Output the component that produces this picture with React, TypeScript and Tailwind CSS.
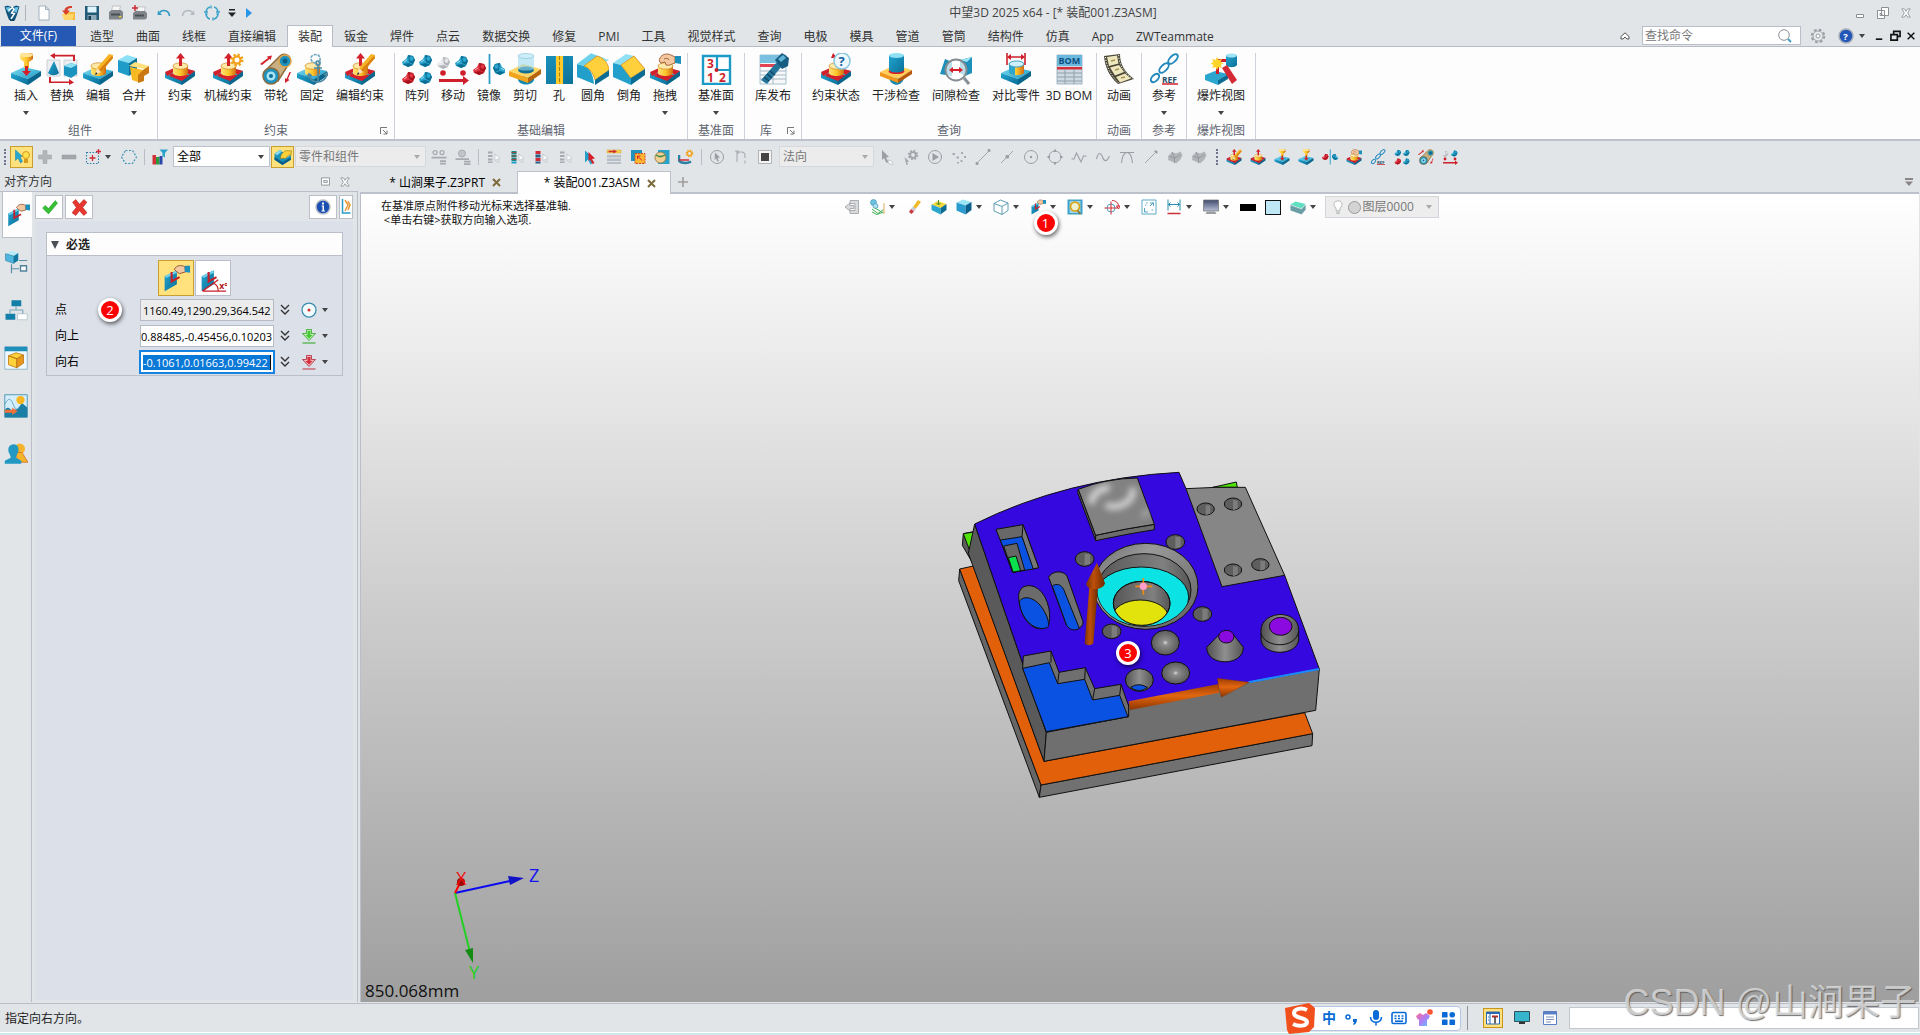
import React from "react";

type Kids = { children?: React.ReactNode };

/* ---------- drawing fragments, all on a 32 x 32 grid ---------- */

const Defs = () => (
  <svg className="absolute h-0 w-0" aria-hidden="true">
    <defs>
      <linearGradient id="blueTop" x1="0" y1="0" x2="1" y2="1">
        <stop offset="0" stopColor="#7fdcf2" />
        <stop offset="1" stopColor="#1899c6" />
      </linearGradient>
      <linearGradient id="blueSide" x1="0" y1="0" x2="1" y2="1">
        <stop offset="0" stopColor="#23a5d0" />
        <stop offset="1" stopColor="#0a6f98" />
      </linearGradient>
      <linearGradient id="gold" x1="0" y1="0" x2="1" y2="0">
        <stop offset="0" stopColor="#ffe27a" />
        <stop offset="0.5" stopColor="#ffc62c" />
        <stop offset="1" stopColor="#cf6a12" />
      </linearGradient>
      <linearGradient id="dark" x1="0" y1="0" x2="0" y2="1">
        <stop offset="0" stopColor="#3f4a6d" />
        <stop offset="1" stopColor="#b9c0d6" />
      </linearGradient>
      <linearGradient id="shirt" x1="0" y1="0" x2="1" y2="1">
        <stop offset="0" stopColor="#ff6a8a" />
        <stop offset="0.5" stopColor="#b07cf5" />
        <stop offset="1" stopColor="#59c8ff" />
      </linearGradient>
    </defs>
  </svg>
);

const Slab = () => (
  <g>
    <path d="M1 20 14 14 31 18 18 26z" fill="url(#blueTop)" />
    <path d="M1 20 18 26v6L1 25z" fill="url(#blueSide)" />
    <path d="M18 26 31 18v5L18 32z" fill="#08658b" />
  </g>
);
const Cyl = () => (
  <g>
    <path d="M9 13v7c0 4 15 4 15 0v-7z" fill="url(#gold)" />
    <ellipse cx="16.500" cy="13" rx="7.500" ry="3.200" fill="#ffe9a6" stroke="#c9862a" strokeWidth=".7" />
  </g>
);
const Bands = () => (
  <path d="M1 19 9 15.500v4.500l-6 3zM24 16l7 2-6 4.500-4-1.500zM9 19l-4 4 13 5 8-6-3-2c-3 3-10 3-14-1z" fill="#d3202b" />
);
const UpArrow = () => <path d="M16.500 0 21 5.500h-3V13h-3V5.500h-3z" fill="#d4202a" />;
const Pencil = () => (
  <g>
    <path d="M15 15 27 1l4 1v3L19 19z" fill="#f6b324" />
    <path d="M17 17 30 3l1 2L19 19z" fill="#d97f12" />
    <path d="M15 15l4 4-6 3z" fill="#f7e2bb" />
    <path d="M13 22l1-3 1.500 2z" fill="#222" />
  </g>
);
const Gear = ({ x = 24, y = 7, r = 5, c = "#f3a31b" }: { x?: number; y?: number; r?: number; c?: string }) => (
  <g>
    <circle cx={x} cy={y} r={r} fill="none" stroke={c} strokeWidth={r / 1.6} strokeDasharray={`${r * 0.4} ${r * 0.385}`} />
    <circle cx={x} cy={y} r={r * 0.72} fill="none" stroke={c} strokeWidth={r * 0.45} />
  </g>
);
const Hand = () => (
  <g>
    <path d="M11 5c2-4 7-5 11-3l4 2v6c-4 1-5 3-9 2l-1-3-4 1c-2-1-2-3-1-5z" fill="#f3c79f" stroke="#a4643b" strokeWidth="1" />
    <path d="M15 6c2-1 4-1 5 1" fill="none" stroke="#a4643b" />
    <path d="M26 3h6v8l-6-1z" fill="#1d8fbb" />
  </g>
);
const Blob = ({ x, y, c, d }: { x: number; y: number; c: string; d: string }) => (
  <g transform={`translate(${x} ${y})`}>
    <path d="M0 7 4 4l2-4 5 1 2 4-2 5-5 2-5-2z" fill={c} />
    <path d="M6 0l5 1 2 4-2 4-4-2z" fill={d} />
    <ellipse cx="9.500" cy="3.600" rx="2" ry="2.400" fill={c} />
    <path d="M1 9l5 3 5-2-4-2z" fill={d} />
    <path d="M2 7l3-2" stroke="#fff" strokeOpacity=".6" fill="none" />
  </g>
);
const B = { c: "#2aa6cf", d: "#0c6d93" };
const R = { c: "#e23340", d: "#a5121d" };
const G = { c: "#e3e5e8", d: "#b0b4b9" };

const Chain = () => (
  <g fill="none" stroke="#2389bd" strokeWidth="2">
    <ellipse cx="7" cy="25" rx="5" ry="3" transform="rotate(-45 7 25)" />
    <ellipse cx="16" cy="15" rx="6" ry="3" transform="rotate(-45 16 15)" />
    <ellipse cx="25" cy="6" rx="6" ry="3" transform="rotate(-45 25 6)" />
  </g>
);
const Plane = () => (
  <g>
    <path d="M3 14 17 7v16L3 31z" fill="url(#blueSide)" />
    <path d="M3 14 17 7v3L5 16z" fill="#6fd0ea" />
    <path d="M11 9v11l9-5" fill="none" stroke="#c81f2b" strokeWidth="2.400" />
  </g>
);

const art: Record<string, React.ReactNode> = {
  insert: (<><Slab /><path d="M10 1c3-2 10-2 13 0v5l-4 3v6h-5V9l-4-3z" fill="url(#gold)" /><ellipse cx="16.500" cy="2" rx="6.500" ry="2" fill="#ffe59a" /><path d="M15 13h3v5h3l-4.500 5L12 18h3z" fill="#d4202a" /></>),
  replace: (<><path d="M1 7h13v16H1zM18 7h13v16H18z" fill="#eceef1" stroke="#ccd0d6" /><path d="M8 8l5 12c-3 3-8 3-11 0z" fill="url(#blueSide)" /><path d="M18 13l7-3 6 2v9l-6 4-7-3z" fill="#1b93bf" /><path d="M18 13l7-3 6 2-6 3z" fill="#8fe0f4" /><path d="M27 8V3.500H9V6L4 2.500 9 0v1.800h20V8zM5 24v4.500h18V26l5 3.500L23 32v-2H3v-6z" fill="#cf1f2a" /></>),
  edit: (<><Slab /><Cyl /><Pencil /></>),
  merge: (<><path d="M0 7 9 2l10 3-8 5z" fill="#8ae0f4" /><path d="M0 7l11 3v13L0 19z" fill="#1f9dc8" /><path d="M11 10l8-5v12l-8 6z" fill="#0b6f98" /><path d="M11 13l6-4 14 4-4 3z" fill="#ffe07a" /><path d="M12 14l13 3v6l-5-1v7l-6-2z" fill="#f8b922" /><path d="M25 17l6-4v7l-5 3v5l-6 2v-8z" fill="#c97812" /></>),
  constraint: (<><Slab /><Bands /><Cyl /><UpArrow /></>),
  mech: (<><Slab /><Bands /><Cyl /><UpArrow /><Gear x={25} y={7} r={5} /></>),
  belt: (<><path d="M4 19 20 3c4-4 12 0 10 6L18 28z" fill="#c9b083" stroke="#8c6a3d" strokeWidth="1.500" /><circle cx="11" cy="23" r="8" fill="#1f93bd" stroke="#8c6a3d" strokeWidth="1.500" /><circle cx="11" cy="23" r="4.500" fill="#a8e4f3" /><circle cx="11" cy="23" r="2" fill="#0b6f98" /><circle cx="25" cy="8" r="6" fill="#1f93bd" stroke="#e0a54a" strokeWidth="1.500" /><circle cx="25" cy="8" r="2.500" fill="#0b5f86" /><path d="M0 11 8 5l-1-1.500 5-1-1.500 4.500-1-1L2 12zM31 19l-3 7 1.500 1-4.500 3v-5l1.500 1 3-7z" fill="#d4202a" /></>),
  fix: (<><Slab /><Cyl /><g fill="none" stroke="#4c8aa5" strokeWidth="1.700"><circle cx="22" cy="10" r="2" /><path d="M22 12v17M18 15h8M13 22c1 5 5 7 9 7s8-3 9-8M11 24l2-3 3 2M28 22l3-2 1 3" /></g><path d="M20 10c-3 0-5-2-5-5s6-5 8-2 1 6-1 7" fill="none" stroke="#72a9c0" strokeWidth="1.700" strokeDasharray="3 1" /></>),
  editC: (<><Slab /><Bands /><Cyl /><UpArrow /><Pencil /></>),
  pattern: (<><Blob x={1} y={2} {...B} /><Blob x={18} y={2} {...B} /><Blob x={1} y={19} {...R} /><Blob x={18} y={19} {...B} /></>),
  move: (<><Blob x={0} y={4} {...G} /><Blob x={18} y={3} {...B} /><circle cx="6" cy="20" r="2.800" fill="#cf1f2a" /><circle cx="26" cy="20" r="2.800" fill="#cf1f2a" /><path d="M2 26h24v-3l6 4.500L26 32v-3H2z" fill="#cf1f2a" /></>),
  mirror: (<><Blob x={0} y={10} {...R} /><path d="M16.500 1v30" stroke="#2a9cc8" strokeWidth="1.800" /><g transform="translate(33 0) scale(-1 1)"><Blob x={0} y={10} {...B} /></g></>),
  cut: (<><path d="M9 27c2 6 14 6 16 0v-4H9z" fill="#1089b3" /><path d="M0 18l14-7 18 5-13 9z" fill="#ffd766" /><path d="M0 18l19 7v5L0 23z" fill="#f0a51c" /><path d="M19 25l13-9v5l-13 9z" fill="#b8660e" /><ellipse cx="17" cy="17" rx="8" ry="3.500" fill="#0f6d92" /><path d="M9 3v13c2 2 14 2 16 0V3z" fill="#9edaf0" fillOpacity=".6" /><ellipse cx="17" cy="3" rx="8" ry="2.500" fill="#cdeef9" stroke="#7fbfd8" strokeWidth=".6" /></>),
  hole: (<><path d="M3 3h27v28H3z" fill="url(#blueSide)" /><path d="M3 3h9v28H3zM21 3h5v28h-5z" fill="#0f7299" fillOpacity=".4" /><path d="M13 3h7v28h-7z" fill="#ffc928" /><path d="M16.500 3v28" stroke="#8a6f10" strokeDasharray="4 1.500" strokeWidth=".8" /></>),
  fillet: (<><path d="M0 11 14 0l18 7-14 8z" fill="#8fe0f4" /><path d="M0 11l7 2c6 2 9 8 10 18L0 24z" fill="#22a0cb" /><path d="M0 11 14 1l6 2L7 13z" fill="#6ed0ea" /><path d="M7 13 20 3c7 2 11 7 12 14L18 27C16 20 13 15 7 13z" fill="#ffcf3c" stroke="#d4901b" strokeWidth=".8" /><path d="M18 27l14-10v6L18 32z" fill="#0b6c93" /></>),
  chamfer: (<><path d="M0 10 13 1l8 2L8 12z" fill="#8fe0f4" /><path d="M0 10l8 2 10 13v7L0 24z" fill="#22a0cb" /><path d="M8 12 21 3l11 13-14 9z" fill="#ffcf3c" stroke="#d4901b" strokeWidth=".8" /><path d="M18 25l14-9v6L18 32z" fill="#0b6c93" /></>),
  drag: (<><Slab /><Bands /><Cyl /><Hand /></>),
  datum: (<><path d="M3 3h27v28H3z" fill="#fff" stroke="#1c9bc6" strokeWidth="2.400" /><path d="M17 3v14M17 17h13" stroke="#1c9bc6" strokeWidth="2.200" /><circle cx="16.500" cy="17" r="2" fill="#cf1f2a" /><g fill="#cf1f2a" fontSize="12" fontWeight="700" fontFamily="Open Sans, sans-serif"><text x="7" y="15">3</text><text x="7" y="28.500">1</text><text x="19" y="28.500">2</text></g></>),
  lib: (<><path d="M3 2h26v29H3z" fill="#f6f8fa" stroke="#8fb2c6" strokeWidth=".8" /><path d="M3 2h26v8H3z" fill="#79bfe0" /><path d="M3 11h26v3H3z" fill="#e04450" /><path d="M3 18h26M3 22h26M3 26h26M16 14v17" stroke="#a9b8c4" /><path d="M4 27 20 9l5 4L10 31z" fill="#24749a" /><path d="M7 24l5 4M10 21l5 4M13 18l5 4" stroke="#0f4563" strokeWidth="1.200" /><path d="M18 7l7-7 7 5-1 8-6 3z" fill="#155c80" /><path d="M21 6l5-4 3 3-5 4z" fill="#5fb5d6" /></>),
  status: (<><Slab /><Bands /><Cyl /><path d="M13 0l4 5h-6z" fill="#d4202a" /><circle cx="22" cy="8" r="8" fill="#eef9fe" stroke="#86c5dd" strokeWidth="1.500" /><text x="18.500" y="13" fontSize="13" fontWeight="700" fill="#1a5fa0" fontFamily="Open Sans, sans-serif">?</text></>),
  interfere: (<><path d="M9 25c2 9 13 9 15 0z" fill="#1089b3" /><path d="M0 19l15-7 17 5-14 9z" fill="#ffcf5a" /><path d="M0 19l18 7v4L0 23z" fill="#f0961c" /><path d="M18 26l14-9v4l-14 9z" fill="#b85a0e" /><path d="M9 2v16c2 3 13 3 15 0V2z" fill="url(#blueSide)" /><ellipse cx="16.500" cy="2.500" rx="7.500" ry="2.500" fill="#8fe0f4" /><path d="M9 18c2 3 13 3 15 0" fill="none" stroke="#d4202a" strokeWidth="1.500" /></>),
  gap: (<><path d="M5 6l7 3v14l-12-2z" fill="#1c8fba" /><path d="M20 7l12-3v16l-7 3-5-3z" fill="#1c8fba" /><path d="M20 7l12-3-5 5z" fill="#9be3f5" /><circle cx="16" cy="17" r="10.500" fill="#fff" fillOpacity=".7" stroke="#858b91" strokeWidth="1.800" /><path d="M24 25l5 6" stroke="#8a9097" strokeWidth="3" /><path d="M9 17l4-3v2h6v-2l4 3-4 3v-2h-6v2z" fill="#d4202a" /></>),
  compare: (<><Slab /><path d="M9 11v9c2 3 13 3 15 0v-9z" fill="url(#gold)" /><path d="M9 11v9c1 1.500 4 2 6 2v-9z" fill="#2aa6cf" /><ellipse cx="16.500" cy="11" rx="7.500" ry="3" fill="#cfeffa" stroke="#3a9fc2" /><path d="M7 0v12M25 0v12M8 4h16" stroke="#cf1f2a" strokeWidth="1.600" /><path d="M7 4l4-3v6zM25 4l-4-3v6z" fill="#cf1f2a" /></>),
  bom: (<><path d="M4 2h25v29H4z" fill="#cfd9e1" stroke="#93a7b6" strokeWidth=".8" /><path d="M4 2h25v11H4z" fill="#6bb8df" /><text x="5.500" y="11" fontSize="9" fontWeight="700" fill="#0e4f80" fontFamily="Open Sans, sans-serif">BOM</text><path d="M4 14h25v2.500H4z" fill="#d4303c" /><path d="M4 20h25M4 24h25M4 28h25M12 16v15M21 16v15" stroke="#8ea0ae" /></>),
  anim: (<><path d="M1 3 17 1c0 10 4 17 14 25l-16 5C6 23 2 14 1 3z" fill="#4a4736" /><path d="M4 4l10-1.500 1.500 8L6 13zM7 14.500l9-2.500 5 7-9 3.500zM13 24l9-3.500 6 5-11 4z" fill="#efe7bd" /><path d="M2.500 4c1 10 5 18 13 26M15.700 2c0 9 5 17 14 24" fill="none" stroke="#fff" strokeWidth="1" strokeDasharray="1.200 1.600" /><path d="M8 8l4-1M12 17l4-1M18 25l4-1" stroke="#a8945a" strokeWidth="1.500" /></>),
  refLink: (<><Chain /><text x="14" y="29.500" fontSize="8.500" fontWeight="700" fill="#24506b" fontFamily="Open Sans, sans-serif">REF</text><path d="M14 31h16" stroke="#d4202a" strokeWidth="1.500" /></>),
  explode: (<><path d="M0 22l10-4 13 3-10 6zM0 22l13 5v5L0 27z" fill="#2aa6cf" /><path d="M13 27l10-6v5l-10 6z" fill="#0b6c93" /><path d="M21 2h11v10c-2 3-9 3-11 0z" fill="url(#blueSide)" /><ellipse cx="26.500" cy="2.500" rx="5.500" ry="2" fill="#9be3f5" /><path d="M11 6h10v3h-7v12h-3z" fill="#cf1f2a" /><path d="M17 15l5-3 10 15-5 4z" fill="#d22b35" /><path d="M12 4l1.500 3L17 6l-1.500 3 3 1.500-3 1.500 1.500 3-3.500-1L12 17l-1.500-3L7 15l1.500-3-3-1.500 3-1.500L7 6l3.500 1z" fill="#ffd42a" /></>),

  logo: (<><path d="M1 3c3-2 6-2 9-1l6 3 8-4 7 2-4 14-5 13H10L5 17z" fill="#14567e" /><path d="M3 5l8-1 4 5-6 6zM21 5l8-1-4 12-5-3z" fill="#6cc4e4" /><path d="M9 11l8-6 3 4-5 7 6 1-7 11" stroke="#fff" strokeWidth="2.800" fill="none" /><path d="M12 29h9v3h-9z" fill="#0c3f60" /></>),
  newDoc: (<path d="M6 2h13l7 7v21H6zM19 2v7h7" fill="#fff" stroke="#9aa9b8" strokeWidth="1.800" />),
  open: (<><path d="M8 14h22v16H8z" fill="#f6b93b" /><path d="M4 18h24l-3 12H8z" fill="#ffd667" /><path d="M24 2C14 2 9 6 9 11H4l8 9 8-9h-5c0-3 3-6 9-5z" fill="#d8402b" /></>),
  save: (<><path d="M2 2h28v28H2z" fill="#235a78" /><path d="M7 3h18v12H7z" fill="#dff4fb" /><path d="M7 20h18v10H7z" fill="#8fa8b6" /><path d="M9 22h5v8H9z" fill="#143c52" /></>),
  print: (<><path d="M9 2h16l-3 12H7z" fill="#f5f5f5" stroke="#999" /><path d="M2 14l5-4h19l4 4v12l-4 3H2z" fill="#7f858b" /><path d="M6 17h18v4H6z" fill="#4b5055" /><path d="M22 22h5v3h-5z" fill="#dccf3a" /></>),
  printPlus: (<><path d="M11 4h16l-3 10H9z" fill="#f5f5f5" stroke="#999" /><path d="M2 16l5-4h19l4 4v10l-4 3H2z" fill="#7f858b" /><path d="M6 19h18v4H6z" fill="#4b5055" /><path d="M6 0v12M0 6h12" stroke="#cf2a35" strokeWidth="3" /></>),
  undo: (<><path d="M7 15c6-7 19-5 20 7" fill="none" stroke="#2f9ac4" strokeWidth="3.200" /><path d="M3 20 12 20 4 11z" fill="#2f9ac4" /></>),
  redo: (<><path d="M25 15C19 8 6 10 5 22" fill="none" stroke="#b4bac0" strokeWidth="3" /><path d="M29 20 20 20 28 11z" fill="#b4bac0" /></>),
  sync: (<path d="M4 13c1-5 4-8 8-9M20 4c4 1 7 4 8 9M28 19c-1 5-4 8-8 9M12 28c-4-1-7-4-8-9M0 14h8M24 14h8M2 18h5M25 18h5M14 1v6M18 25v6" fill="none" stroke="#3ea3c8" strokeWidth="2.800" />),

  pick: (<><path d="M3 2l14 13-5 1 5 9-4 3-5-10-5 5z" fill="#27a7d4" stroke="#0d7ca6" /><circle cx="24" cy="12" r="7" fill="#ffe04d" stroke="#d79a1a" strokeWidth="2" /><path d="M20 20h8v8h-8z" fill="#d79a1a" /></>),
  plus: (<path d="M12 3h8v9h9v8h-9v9h-8v-9H3v-8h9z" fill="#b3b6b9" stroke="#9ea1a4" />),
  minus: (<path d="M2 12h28v8H2z" fill="#a4a7aa" stroke="#96999c" />),
  boxPlus: (<><path d="M3 7h24v22H3z" fill="none" stroke="#2a7fa5" strokeWidth="2.200" strokeDasharray="3 3" /><path d="M15 12v12M9 18h12M27 0v10M22 5h10" stroke="#cf2a35" strokeWidth="2.600" /></>),
  hexa: (<path d="M9 3h14l8 13-8 13H9L1 16z" fill="none" stroke="#3a92b5" strokeWidth="2.400" strokeDasharray="4 3" />),
  filter: (<><path d="M1 12h7v19H1z" fill="#d3303a" /><path d="M8 16h7v15H8z" fill="#2a9a3c" /><path d="M15 14h6v17h-6z" fill="#2b46a8" /><path d="M15 1h17l-6 7v9l-5-3V8z" fill="#2aa3cb" /></>),
  surf: (<><path d="M1 10l10-7 6 6-4 6 8 3 9-6v9l-15 9L1 21z" fill="#1a93bd" /><path d="M1 21l14 9 15-9v-4l-15 8L1 16z" fill="#0b5f86" /><path d="M1 10l10-7 3 3-8 7z" fill="#7fd6ee" /><path d="M13 11l7-6h11l-1 8-4-1-6 7-4-1-5 1z" fill="#ffd23a" stroke="#8a6c14" /></>),
  grayA: (<><circle cx="8" cy="7" r="4" fill="none" stroke="#a7abaf" strokeWidth="2.500" /><circle cx="22" cy="7" r="4" fill="none" stroke="#a7abaf" strokeWidth="2.500" /><path d="M1 17h30M18 24h12M18 29h12" stroke="#a7abaf" strokeWidth="3.500" /></>),
  grayB: (<><circle cx="14" cy="9" r="7" fill="#c3c6c9" stroke="#a7abaf" strokeWidth="2" /><path d="M1 20h27M18 25h13M18 30h13" stroke="#a7abaf" strokeWidth="3.500" /></>),
  list: (<><path d="M4 5h9v4H4zM4 12h9v4H4zM4 19h9v4H4zM4 25h9v3H4z" fill="#a7abaf" /><path d="M18 10l10 9-5 1 3 6-3 1-2-6-3 2z" fill="#fff" stroke="#a7abaf" /></>),
  listT: (<><path d="M3 4h10v6H3zM3 11h10v6H3zM3 18h10v6H3z" fill="#1a8a86" /><path d="M3 7h10M3 14h10M3 21h10" stroke="#c8313a" strokeWidth="1.500" /><path d="M3 25h10v4H3z" fill="#1f9dc8" /><path d="M18 10l10 9-5 1 3 6-3 1-2-6-3 2z" fill="#fff" stroke="#a7abaf" /></>),
  listR: (<><path d="M3 4h10v6H3zM3 18h10v6H3z" fill="#cf2a35" /><path d="M3 11h10v6H3zM3 25h10v4H3z" fill="#255f86" /><path d="M18 10l10 9-5 1 3 6-3 1-2-6-3 2z" fill="#fff" stroke="#a7abaf" /></>),
  cursorBR: (<><path d="M6 3l17 15-7 1 5 9-4 3-5-10-6 6z" fill="#22a0cb" /><path d="M13 6l13 13-6 1 5 8-4 2-5-9-3 3z" fill="#d3202b" /></>),
  rows: (<><path d="M2 2h28v6H2z" fill="#ffd34a" stroke="#c0a040" /><path d="M2 12h28v5H2zM2 19h28v5H2zM2 26h28v4H2z" fill="#b8bfc7" /><path d="M5 5h12" stroke="#cf2a35" strokeWidth="3" /><path d="M15 1l7 4-7 4z" fill="#cf2a35" /></>),
  sheetO: (<><path d="M2 2h22v22H2z" fill="#1f93bd" /><path d="M10 9h20v20H10z" fill="#ffb733" stroke="#d4481d" strokeWidth="2" strokeDasharray="4 2" /><path d="M15 14l9 9M15 14h6M15 14v6" stroke="#d4202a" strokeWidth="2" /></>),
  globe: (<><path d="M8 2h23v28H8z" fill="#2aa3cb" /><circle cx="13" cy="17" r="11" fill="#f1cf95" stroke="#8e6b33" strokeWidth="1.500" /><path d="M4 12c5 4 12 4 18 0" stroke="#3a8a48" strokeWidth="3" fill="none" /></>),
  hookGear: (<><path d="M2 12v10c0 6 16 8 24 3" fill="none" stroke="#2a7fa5" strokeWidth="5" /><path d="M2 22h20" stroke="#cf2a35" strokeWidth="3" /><Gear x={23} y={9} r={6} /></>),
  circArrow: (<><circle cx="16" cy="16" r="13" fill="none" stroke="#9b9fa3" strokeWidth="2" /><path d="M12 7l10 10-5 1 3 6-3 1-3-6-3 3z" fill="#9b9fa3" /></>),
  hook: (<path d="M8 26V6h9c5 0 7 3 7 8v4M24 23v6M4 4h6v6" fill="none" stroke="#a7abaf" strokeWidth="2.200" />),
  square: (<><path d="M3 3h26v26H3z" fill="#f4f4f4" stroke="#b3b3b3" strokeWidth="2" /><path d="M8 8h16v16H8z" fill="#444" /></>),
  gCursor: (<><path d="M6 2l14 14-6 1 5 9-4 2-5-10-4 4z" fill="#9b9fa3" /><path d="M18 22l8 3 2 6-8-2z" fill="#fff" stroke="#a7abaf" /></>),
  gGear: (<><Gear x={20} y={12} r={8} c="#a0a4a8" /><path d="M3 16l9 9-4 1 2 5-3 1z" fill="#a0a4a8" /></>),
  gPlay: (<><circle cx="16" cy="16" r="13" fill="none" stroke="#9b9fa3" strokeWidth="2" /><path d="M11 8l13 8-13 8z" fill="#9b9fa3" /></>),
  gDots: (<path d="M3 8h5v4H3zM11 15h5v4h-5zM20 6h4v4h-4zM26 14h4v4h-4zM19 22h4v4h-4zM12 26h4v3h-4z" fill="#a7abaf" />),
  gLine: (<path d="M4 28 28 4M2 27h4v4H2zM26 1h4v4h-4z" fill="#9b9fa3" stroke="#9b9fa3" strokeWidth="1.800" />),
  gLine2: (<path d="M4 28 28 4M14 13h5v5h-5z" fill="#9b9fa3" stroke="#9b9fa3" strokeWidth="1.800" />),
  gCirc: (<><circle cx="16" cy="16" r="13" fill="none" stroke="#9b9fa3" strokeWidth="2" /><circle cx="16" cy="16" r="2.500" fill="#9b9fa3" /></>),
  gCirc2: (<><circle cx="16" cy="16" r="12" fill="none" stroke="#9b9fa3" strokeWidth="2" /><path d="M14 1h4v5h-4zM14 26h4v5h-4zM1 14h5v4H1zM26 14h5v4h-5z" fill="#9b9fa3" /></>),
  gWave: (<path d="M1 20h5l5-12 9 18 5-12h6" fill="none" stroke="#9b9fa3" strokeWidth="2.200" />),
  gWave2: (<path d="M3 20c4-16 9-12 12-4s8 12 14-2" fill="none" stroke="#9b9fa3" strokeWidth="2.200" />),
  gArch: (<path d="M2 7h28M5 28C7 10 12 7 16 7s9 3 11 21" fill="none" stroke="#9b9fa3" strokeWidth="2.200" />),
  gLine3: (<path d="M4 28 28 4M23 4h5v5z" fill="#9b9fa3" stroke="#9b9fa3" strokeWidth="1.800" />),
  gBlob: (<><path d="M3 14l7-8 8 3 9-4 4 7-4 9-9 8-9-4-7-3z" fill="#b2b5b8" /><path d="M3 14l12 4 12-6M15 18v10M10 6l5 12" fill="none" stroke="#8f9397" strokeWidth="1.500" /></>),

  exit: (<path d="M12 3h17v26H12v-6h10V9H12zM12 8v5h8v6h-8v5L2 16z" fill="#d9dbdd" stroke="#a2a5a8" strokeWidth="1.800" />),
  origin: (<><circle cx="9" cy="7" r="6" fill="#6cc3e0" stroke="#2c7fa3" /><circle cx="13" cy="14" r="5" fill="#a9dff0" stroke="#2c7fa3" /><path d="M6 20l12 9 11-8M6 26l10 5 13-5M12 18l16 10" fill="none" stroke="#44b257" strokeWidth="2" /><path d="M30 8v22" stroke="#e0a54a" strokeWidth="1.800" /></>),
  brush: (<><path d="M14 16 24 2l6 4-11 14z" fill="#f1b928" /><path d="M10 20l4-5 6 5-4 5z" fill="#c7ccd2" /><path d="M6 26l4-6 6 5-5 5z" fill="#c93a40" /></>),
  cubeY: (<><path d="M1 11 14 4l17 6-12 8z" fill="#f4d93d" /><path d="M1 11l18 7v13L1 22z" fill="#2aa6cf" /><path d="M19 18l12-8v12l-12 9z" fill="#0b6c93" /><path d="M15 2v9M11 8l4 4 4-4" fill="none" stroke="#4a8a28" strokeWidth="2" /></>),
  cubeB: (<><path d="M1 7 14 1l17 5-12 7z" fill="#9be3f5" /><path d="M1 7l18 6v18L1 23z" fill="#2a9ccf" /><path d="M19 13l12-7v16l-12 9z" fill="#0b5f8c" /></>),
  cubeW: (<path d="M2 9 15 2l15 6v15l-12 8-16-7zM2 9l16 6 12-7M18 15v16" fill="#fff" stroke="#4f93ad" strokeWidth="1.800" />),
  align: (<><Plane /><path d="M14 6c3-5 8-5 12-3l1 6-7 2-3-2z" fill="#f3c79f" stroke="#8a4a2b" /><path d="M26 2h6v8l-6-1z" fill="#1d8fbb" /></>),
  alignAng: (<><Plane /><path d="M4 31 22 18M4 31h27M17 22c4 2 5 5 5 9" fill="none" stroke="#c81f2b" strokeWidth="1.500" /><text x="23" y="28" fontSize="10" fontWeight="700" fill="#b01822" fontFamily="Open Sans, sans-serif">x°</text></>),
  zoomW: (<><path d="M1 1h30v30H1z" fill="#3fa0c8" /><path d="M5 4h22v24H5z" fill="#9fd6ea" /><circle cx="16" cy="15" r="9" fill="#eef2d0" stroke="#d9a41a" strokeWidth="3.500" /><path d="M21 23l6 7" stroke="#8d6d1f" strokeWidth="3" /></>),
  rotate: (<><circle cx="14" cy="18" r="8" fill="none" stroke="#3a9cc0" strokeWidth="1.800" /><path d="M14 5v26M1 18h26" stroke="#cf2a35" strokeWidth="2" /><path d="M16 3c8 0 13 5 13 12M29 20l-4-6h7z" fill="none" stroke="#cf2a35" strokeWidth="2" /></>),
  fit: (<><path d="M2 2h28v28H2z" fill="#fff" stroke="#5fa9c6" strokeWidth="2" /><path d="M7 18v8h7M25 7l-7 7M18 8h7v6M10 8h3M8 12h2M21 22h3" fill="none" stroke="#2a8db5" strokeWidth="1.600" /></>),
  dist: (<><path d="M4 1v22M28 1v22M5 11h22M9 7l-4 4 4 4M23 7l4 4-4 4" fill="none" stroke="#2a8db5" strokeWidth="2" /><path d="M3 29h26" stroke="#c8313a" strokeWidth="3" /></>),
  screen: (<><path d="M1 2h30v22H1z" fill="url(#dark)" stroke="#777" strokeWidth="1.500" /><path d="M8 25h16l3 5H5z" fill="#9a9da1" /></>),
  layers: (<><path d="M1 11 11 5l20 5-8 9z" fill="#5fe0c3" /><path d="M1 12l22 8 8-9v11l-8 9L1 23z" fill="#7fa9b0" /><path d="M1 16l22 8 8-9M1 20l22 8 8-9" fill="none" stroke="#4c8d96" strokeWidth="1.500" /></>),
  bulb: (<path d="M16 2c-7 0-10 5-8 10l4 7v4h8v-4l4-7c2-5-1-10-8-10zM12 26h8M13 29h6" fill="#fff" stroke="#a9acaf" strokeWidth="1.800" />),

  tree: (<><path d="M2 5l8-4 9 3-6 4z" fill="#b9ebf7" /><path d="M2 5l11 3v10L2 14z" fill="#4fb7de" stroke="#2c7fa3" strokeWidth=".8" /><path d="M13 8l6-4v10l-6 4z" fill="#0f77a0" /><path d="M10 19v12M10 25h10M20 14h11" fill="none" stroke="#5e8ea6" strokeWidth="1.600" /><path d="M22 21h8v7h-8z" fill="#fff" stroke="#4f819a" strokeWidth="1.800" /></>),
  org: (<><path d="M10 3h13v8H10zM2 21h13v8H2z" fill="#137fa8" /><path d="M18 21h13v8H18z" fill="#fff" stroke="#a9c0cc" /><path d="M16 11v5M8 21v-5h17v5" fill="none" stroke="#79a7bb" strokeWidth="1.500" /></>),
  cubePage: (<><path d="M1 1h30v30H1z" fill="#eef7fb" stroke="#7aa9bf" /><path d="M1 1h30v6H1z" fill="#1d8fb8" /><path d="M6 13l10-4 10 3-9 5zM6 13l11 4v12L6 25z" fill="#ffd23a" stroke="#b8700f" /><path d="M17 17l9-5v11l-9 6z" fill="#e79619" stroke="#b8700f" /></>),
  scene: (<><path d="M1 1h30v30H1z" fill="#d5effa" stroke="#2a7fa5" /><path d="M1 21c4-4 6-3 9 1l8-2 6-8 7 6v13H1z" fill="#1b7ea5" /><path d="M1 14C6 4 9 6 12 13s4 9 8 5" fill="none" stroke="#5a9fc0" strokeWidth="1.200" /><circle cx="22" cy="8" r="5.500" fill="#f9b51e" /><path d="M1 21h10v-3l7 5-7 5v-3H1z" fill="#f0703a" /></>),
  users: (<><circle cx="21" cy="9" r="7" fill="#f6b42c" /><path d="M16 14h8l8 13H18z" fill="#f6b42c" stroke="#cf6a2a" /><path d="M13 3c6 0 7 6 6 10-1 3-3 5-3 8l7 4v4H1v-4l8-4c0-3-2-5-3-8-1-5 1-10 7-10z" fill="#2298c2" /></>),
  check: (<path d="M3 17l5-5 6 6L27 3l4 5-17 20z" fill="#35c234" stroke="#1b8f1d" />),
  cross: (<path d="M3 6l6-5 7 9 8-9 6 5-8 10 8 10-6 5-8-9-7 9-7-5 8-10z" fill="#e8372f" stroke="#a81a18" />),
  info: (<><circle cx="16" cy="16" r="14" fill="#1b4fb2" stroke="#b9bec6" strokeWidth="3" /><path d="M13 13h5v10h2v2h-7v-2h2v-8h-2zM14 7h4v4h-4z" fill="#fff" /></>),
  circPt: (<><circle cx="16" cy="16" r="14" fill="#f1fafd" stroke="#3a8cae" strokeWidth="2.500" /><circle cx="16" cy="16" r="3" fill="#d4302c" /></>),
  downG: (<><path d="M11 3h10v8h8L16 25 3 11h8z" fill="#b6f0a6" stroke="#35a02e" strokeWidth="1.600" /><path d="M13 6h6v8h4l-7 7-7-7h4z" fill="#46c838" /><path d="M3 30h26" stroke="#49b342" strokeWidth="2.500" /></>),
  downR: (<><path d="M11 3h10v8h8L16 25 3 11h8z" fill="#f2b3b8" stroke="#ab2a36" strokeWidth="1.600" /><path d="M13 6h6v8h4l-7 7-7-7h4z" fill="#d62c3c" /><path d="M3 30h26" stroke="#c3555f" strokeWidth="2.500" /></>),
  help: (<><circle cx="16" cy="16" r="14" fill="#2257b8" stroke="#aab0ba" strokeWidth="3" /><text x="10.500" y="23" fontSize="19" fontWeight="700" fill="#fff" fontFamily="Open Sans, sans-serif">?</text></>),
  gearG: (<><circle cx="16" cy="16" r="12.500" fill="none" stroke="#999da2" strokeWidth="4" strokeDasharray="5.500 4.320" /><circle cx="16" cy="16" r="10" fill="#e8eaec" stroke="#999da2" strokeWidth="1.800" /><circle cx="16" cy="16" r="4" fill="#fff" stroke="#999da2" strokeWidth="2" /></>),
};

const Pic = ({ n, cls = "h-4 w-4" }: { n: string; cls?: string }) => (
  <svg viewBox="0 0 32 32" className={`${cls} shrink-0`} aria-hidden="true">{art[n]}</svg>
);
const Caret = ({ cls = "border-t-[#444]" }: { cls?: string }) => (
  <span className={`block h-0 w-0 shrink-0 border-x-[3px] border-t-[4px] border-x-transparent ${cls}`} />
);
const Badge = ({ children, cls }: Kids & { cls: string }) => (
  <span className={`absolute flex h-6 w-6 items-center justify-center rounded-full border-[3px] border-white bg-[#fb0303] text-[13px] leading-none text-white shadow-[1px_2px_4px_rgba(0,0,0,0.6)] ${cls}`}>{children}</span>
);
const WinIcon = ({ d, dark = false, cls = "h-3 w-3" }: { d: string; dark?: boolean; cls?: string }) => (
  <svg viewBox="0 0 12 12" className={cls} fill={dark ? "none" : "#fff"} stroke={dark ? "#111" : "#8b8f94"} strokeWidth={dark ? 1.8 : 1}><path d={d} /></svg>
);
const CROSS = "M1 1h3l2 3 2-3h3L8 6l3 5H8L6 8l-2 3H1l3-5z";

/* ---------- ribbon ---------- */

type Tool = { n: string; t: string; w?: string; more?: boolean };
type Grp = { t: string; cls: string; launch?: boolean; tools: Tool[] };

const groups: Grp[] = [
  { t: "组件", cls: "pl-2 pr-[5px]", tools: [{ n: "insert", t: "插入", more: true }, { n: "replace", t: "替换" }, { n: "edit", t: "编辑" }, { n: "merge", t: "合并", more: true }] },
  { t: "约束", cls: "px-1", launch: true, tools: [{ n: "constraint", t: "约束" }, { n: "mech", t: "机械约束", w: "w-[60px]" }, { n: "belt", t: "带轮" }, { n: "fix", t: "固定" }, { n: "editC", t: "编辑约束", w: "w-[60px]" }] },
  { t: "基础编辑", cls: "px-1", tools: [{ n: "pattern", t: "阵列" }, { n: "move", t: "移动" }, { n: "mirror", t: "镜像" }, { n: "cut", t: "剪切" }, { n: "hole", t: "孔", w: "w-8" }, { n: "fillet", t: "圆角" }, { n: "chamfer", t: "倒角" }, { n: "drag", t: "拖拽", more: true }] },
  { t: "基准面", cls: "px-1", tools: [{ n: "datum", t: "基准面", w: "w-12", more: true }] },
  { t: "库", cls: "px-1", launch: true, tools: [{ n: "lib", t: "库发布", w: "w-12" }] },
  { t: "查询", cls: "px-1", tools: [{ n: "status", t: "约束状态", w: "w-[60px]" }, { n: "interfere", t: "干涉检查", w: "w-[60px]" }, { n: "gap", t: "间隙检查", w: "w-[60px]" }, { n: "compare", t: "对比零件", w: "w-[60px]" }, { n: "bom", t: "3D BOM", w: "w-[46px]" }] },
  { t: "动画", cls: "px-1", tools: [{ n: "anim", t: "动画" }] },
  { t: "参考", cls: "px-1", tools: [{ n: "refLink", t: "参考", more: true }] },
  { t: "爆炸视图", cls: "px-1", tools: [{ n: "explode", t: "爆炸视图", w: "w-[60px]", more: true }] },
];

const tabs = ["造型", "曲面", "线框", "直接编辑", "装配", "钣金", "焊件", "点云", "数据交换", "修复", "PMI", "工具", "视觉样式", "查询", "电极", "模具", "管道", "管筒", "结构件", "仿真", "App", "ZWTeammate"];

const Ribbon = () => (
  <section className="flex items-stretch border-b-2 border-[#bcc1cb] bg-[#fdfdfd] pt-[6px]">
    {groups.map((g) => (
      <div key={g.t} className={`flex flex-col border-r border-[#ccd1da] ${g.cls}`}>
        <div className="flex h-[68px]">
          {g.tools.map((t) => (
            <button key={t.t} type="button" className={`flex flex-col items-center ${t.w ?? "w-9"}`}>
              <Pic n={t.n} cls="h-8 w-8" />
              <span className="mt-[3px] h-4 whitespace-nowrap leading-4">{t.t}</span>
              {t.more && <span className="mt-[7px]"><Caret /></span>}
            </button>
          ))}
        </div>
        <div className="relative flex h-[18px] items-center justify-center pt-[2px] text-[#5d6470]">
          <span className={g.t === "库" ? "pr-[14px]" : ""}>{g.t}</span>
          {g.launch && (
            <button type="button" aria-label={`${g.t}设置`} className="absolute right-[2px] top-[6px]">
              <svg viewBox="0 0 8 8" className="h-2 w-2" fill="none" stroke="#777"><path d="M.5 7V.5H7M3 3l4 4M7 3.500V7H3.500" /></svg>
            </button>
          )}
        </div>
      </div>
    ))}
  </section>
);

/* ---------- selection tool bar ---------- */

const Tb = ({ n }: { n: string }) => (
  <button type="button" aria-label={n} className="flex h-[22px] w-6 shrink-0 items-center justify-center"><Pic n={n} /></button>
);
const Sep = () => <span className="mx-[3px] h-4 w-px shrink-0 bg-[#b9bec6]" />;
const Grip = () => <span className="mx-[4px] h-4 w-0 shrink-0 border-l-2 border-dotted border-[#6d7389]" />;
const Combo = ({ v, w, off = false, label }: { v: string; w: string; off?: boolean; label: string }) => (
  <span className={`relative flex h-[21px] shrink-0 items-center border ${w} ${off ? "border-[#d5d8dc] bg-[#ececec] text-[#777]" : "border-[#bcc1cb] bg-white text-black"}`}>
    <select aria-label={label} disabled={off} className="h-full w-full appearance-none pl-[3px] opacity-100 outline-none"><option>{v}</option></select>
    <span className="pointer-events-none absolute right-[5px]"><Caret cls={off ? "border-t-[#aaa]" : "border-t-[#444]"} /></span>
  </span>
);

const SelectBar = () => (
  <section className="flex h-[30px] items-center overflow-hidden pt-px">
    <Grip />
    <button type="button" aria-label="拾取" className="flex h-[22px] w-[23px] shrink-0 items-center justify-center border border-[#c9a030] bg-[#ffe27d]"><Pic n="pick" /></button>
    <Tb n="plus" /><Tb n="minus" /><Tb n="boxPlus" />
    <span className="w-3 shrink-0"><Caret /></span>
    <Tb n="hexa" />
    <Sep />
    <Tb n="filter" />
    <span className="ml-px" />
    <Combo v="全部" w="w-[97px]" label="过滤器" />
    <button type="button" aria-label="拾取范围" className="mx-px flex h-[22px] w-[23px] shrink-0 items-center justify-center border border-[#c9a030] bg-[#ffe27d]"><Pic n="surf" cls="h-[18px] w-[18px]" /></button>
    <Combo v="零件和组件" w="w-[131px]" off label="范围" />
    <span className="ml-px" />
    <Tb n="grayA" /><Tb n="grayB" />
    <Sep />
    {["list", "listT", "listR", "list", "cursorBR", "rows", "sheetO", "globe", "hookGear"].map((n, i) => <Tb key={i} n={n} />)}
    <Sep />
    <Tb n="circArrow" /><Tb n="hook" /><Tb n="square" />
    <span className="ml-[2px]" />
    <Combo v="法向" w="w-[95px]" off label="方向" />
    <span className="ml-px" />
    {["gCursor", "gGear", "gPlay", "gDots", "gLine", "gLine2", "gCirc", "gCirc2", "gWave", "gWave2", "gArch", "gLine3", "gBlob", "gBlob"].map((n, i) => <Tb key={i} n={n} />)}
    <span className="ml-px" />
    <Grip />
    {["editC", "constraint", "insert", "insert", "mirror", "drag", "refLink", "pattern", "belt", "move"].map((n, i) => <Tb key={i} n={n} />)}
  </section>
);

/* ---------- left panel ---------- */

const Field = ({ label, icon, children }: Kids & { label: string; icon: string }) => (
  <div className="relative flex h-[26px] items-center pl-2">
    <label htmlFor={label} className="w-[84px] text-black">{label}</label>
    <div className="flex w-[136px] justify-center">{children}</div>
    <button type="button" aria-label={`${label}展开`} className="ml-[5px]">
      <svg viewBox="0 0 10 12" className="h-3 w-[10px]" fill="none" stroke="#333" strokeWidth="1.400"><path d="M1 1l4 4 4-4M1 6l4 4 4-4" /></svg>
    </button>
    <button type="button" aria-label={`${label}选项`} className="ml-[11px] flex items-center gap-[5px]"><Pic n={icon} /><Caret /></button>
  </div>
);
const inputCls = "h-[22px] w-[134px] border border-[#b5bac4] text-[11px] text-black outline-none";

const SidePanel = () => (
  <aside className="mr-[2px] flex w-[358px] shrink-0 flex-col">
    <header className="flex h-[20px] items-center pl-1 pr-[7px] pt-px text-[#333]">
      <h2 className="flex-1">对齐方向</h2>
      <button type="button" aria-label="固定面板"><svg viewBox="0 0 10 10" className="h-[9px] w-[9px]" fill="#fff" stroke="#8b8f94"><path d="M.5 1h9v8h-9zM3 4h4v2H3z" /></svg></button>
      <button type="button" aria-label="关闭面板" className="ml-[9px]"><WinIcon d={CROSS} cls="h-[10px] w-3" /></button>
    </header>
    <div className="flex flex-1 border-t border-r border-[#b9bec8]">
      <nav className="ml-[2px] flex w-[30px] flex-col border-r border-[#b9bec8]">
        <button type="button" aria-label="命令" className="-mr-px flex h-[46px] items-center justify-center border-b border-l border-[#b9bec8] bg-[#fdfdfd]"><Pic n="align" cls="h-6 w-6" /></button>
        {["tree", "org", "cubePage", "scene", "users"].map((n) => (
          <button key={n} type="button" aria-label={n} className="flex h-12 items-center justify-center pr-[2px]"><Pic n={n} cls="h-6 w-6" /></button>
        ))}
      </nav>
      <div className="flex flex-1 flex-col pb-[2px] pl-[3px] pr-1">
        <div className="flex h-[29px] items-start pt-[3px]">
          {["check", "cross"].map((n) => (
            <button key={n} type="button" aria-label={n} className="mr-[2px] flex h-6 w-7 items-center justify-center border border-[#b9bec8] bg-white"><Pic n={n} cls="h-[17px] w-[17px]" /></button>
          ))}
          <span className="flex-1" />
          <button type="button" aria-label="信息" className="mr-[2px] flex h-6 w-7 items-center justify-center border border-[#b9bec8] bg-white"><Pic n="info" /></button>
          <button type="button" aria-label="折叠" className="flex h-6 w-[14px] items-center justify-center border border-[#b9bec8] bg-white">
            <svg viewBox="0 0 10 16" className="h-4 w-[10px]" fill="none"><path d="M1.500 0v14h8" stroke="#2a9cc8" strokeWidth="1.500" /><path d="M4 1l3 5-3 6M7 2l2 4-2 5" stroke="#e6983a" strokeWidth="1.500" /></svg>
          </button>
        </div>
        <div className="flex-1 bg-[#dce0e9] pl-[11px] pr-[10px] pt-[11px]">
          <section className="border border-[#b9bec8]">
            <h3 className="flex h-[23px] items-center gap-[7px] border-b border-[#b9bec8] bg-[#fdfdfd] pl-1 pt-px font-bold text-[#222]">
              <span className="h-0 w-0 border-x-[4px] border-t-[8px] border-x-transparent border-t-[#4a4f57]" />必选
            </h3>
            <div className="flex justify-center gap-px pb-px pr-px pt-1">
              <button type="button" aria-label="拾取方向" className="flex h-9 w-9 items-center justify-center border border-[#c9a030] bg-[#ffe27d]"><Pic n="align" cls="h-7 w-7" /></button>
              <button type="button" aria-label="角度方向" className="flex h-9 w-9 items-center justify-center border border-[#b9bec8] bg-white"><Pic n="alignAng" cls="h-7 w-7" /></button>
            </div>
            <Field label="点" icon="circPt">
              <Badge cls="left-[51px] top-px">2</Badge>
              <input id="点" defaultValue="1160.49,1290.29,364.542" className={`${inputCls} bg-[#ececec] pl-[2px]`} />
            </Field>
            <Field label="向上" icon="downG">
              <input id="向上" defaultValue="0.88485,-0.45456,0.10203" className={`${inputCls} bg-white`} />
            </Field>
            <Field label="向右" icon="downR">
              <span className="flex h-6 w-[136px] items-center border-2 border-[#1683e0] bg-white px-[2px]">
                <input id="向右" defaultValue="-0.1061,0.01663,0.99422" className="h-[15px] min-w-0 flex-1 bg-[#0a78d7] text-[11px] leading-[15px] text-white outline-none" />
                <span className="h-[15px] w-px bg-black" />
              </span>
            </Field>
          </section>
        </div>
      </div>
    </div>
  </aside>
);

/* ---------- viewport ---------- */

const Hole = ({ x, y, rx, ry }: { x: number; y: number; rx: number; ry: number }) => (
  <g>
    <ellipse cx={x} cy={y} rx={rx} ry={ry} fill="#5e5e5e" stroke="#111" strokeWidth="3" />
    <path d={`M${x} ${y - ry + 6}l${rx - 12} 2v${ry * 1.3}l-${rx - 12} 5z`} fill="#7c7c7c" />
  </g>
);

const Model = () => (
  <svg viewBox="0 0 1200 1050" className="absolute left-[579px] top-[266px] h-[350px] w-[400px]" role="img" aria-label="装配模型" strokeLinejoin="round">
    <defs>
      <radialGradient id="ball"><stop offset="0" stopColor="#d8d8d8" /><stop offset=".2" stopColor="#8c8c8c" /><stop offset="1" stopColor="#5a5a5a" /></radialGradient>
      <linearGradient id="rim" x1="0" y1="0" x2="1" y2="1"><stop offset="0" stopColor="#686868" /><stop offset=".3" stopColor="#999" /><stop offset="1" stopColor="#606060" /></linearGradient>
      <linearGradient id="shade" x1="0" y1="0" x2="1" y2="0"><stop offset="0" stopColor="#505050" /><stop offset=".5" stopColor="#8f8f8f" /><stop offset="1" stopColor="#555" /></linearGradient>
      <linearGradient id="bore" x1="0" y1="0" x2="1" y2="0"><stop offset="0" stopColor="#565656" /><stop offset=".7" stopColor="#808080" /><stop offset="1" stopColor="#555" /></linearGradient>
      <linearGradient id="rod" x1="0" y1="0" x2="1" y2="0"><stop offset="0" stopColor="#7a2f02" /><stop offset=".4" stopColor="#bd500a" /><stop offset="1" stopColor="#6d2800" /></linearGradient>
      <linearGradient id="rodH" x1="0" y1="0" x2="0" y2="1"><stop offset="0" stopColor="#9a3d04" /><stop offset=".45" stopColor="#e2660f" /><stop offset="1" stopColor="#8a3502" /></linearGradient>
      <filter id="soft" x="-20%" y="-20%" width="140%" height="140%"><feGaussianBlur stdDeviation="10" /></filter>
      <clipPath id="padClip"><path d="M415 88Q500 55 592 54L643 193Q560 205 467 226z" /></clipPath>
      <clipPath id="boreClip"><ellipse cx="605" cy="430" rx="85" ry="66" /></clipPath>
      <clipPath id="bigClip"><ellipse cx="612" cy="390" rx="140" ry="108" /></clipPath>
    </defs>
    <g stroke="#101010" strokeWidth="3">
      <path d="M59 327 303 975 298 1012 56 362z" fill="#666" />
      <path d="M303 975 1118 821 1116 857 298 1012z" fill="#717171" />
      <path d="M59 327 100 318 312 904 1094 758 1118 821 303 975z" fill="#e2600a" />
      <path d="M70 221 110 213 110 330 67 256z" fill="#5c5c5c" />
      <path d="M70 221 102 216 92 280z" fill="#4fe30a" />
      <path d="M818 82 889 66 892 82z" fill="#4fe30a" />
      <path d="M104 192 319 817 312 904 85 280z" fill="#5a5a5a" />
      <path d="M319 817 564 770 566 735 1138 627 1127 751 312 904z" fill="#6f6f6f" />
      <path d="M104 192Q380 55 717 37L738 86 1034 346 1138 627 566 735 319 817z" fill="#3408df" />
      <path d="M738 86Q830 80 916 82L1034 346 846 380z" fill="#868686" />
      <path d="M415 88 413 98 467 242 467 226z" fill="#5e5e5e" />
      <path d="M467 226Q560 205 643 193L643 209Q560 222 467 242z" fill="#6c6c6c" />
      <path d="M415 88Q500 55 592 54L643 193Q560 205 467 226z" fill="#828282" />
    </g>
    <g clipPath="url(#padClip)">
      <g filter="url(#soft)" fill="none" stroke="#d2d2d2" strokeLinecap="round">
        <path d="M455 122C460 98 480 88 500 84" strokeWidth="22" />
        <path d="M505 138C540 145 580 125 578 92" strokeWidth="20" />
        <path d="M612 165l12-12" strokeWidth="16" stroke="#a8a8a8" />
      </g>
    </g>
    <g stroke="#101010" strokeWidth="3">
      <path d="M168 208 249 194 296 323 218 337z" fill="#686868" />
      <path d="M249 194 296 323 278 327 246 230z" fill="#777" />
      <path d="M181 240 246 230 280 327 218 337z" fill="#0a52e2" />
      <path d="M191 258 231 250 254 330 218 337z" fill="#666" />
      <path d="M205 293 228 288 242 332 219 336z" fill="#0ae04c" />
      <path d="M236 412C234 385 255 370 283 380 320 395 335 455 327 490 320 510 300 508 285 503 255 490 238 450 236 412z" fill="#6b6b6b" />
      <path d="M238 424C250 405 280 412 300 435 320 460 328 485 325 500 310 510 290 505 275 495 255 480 240 455 238 424z" fill="#0a52e2" />
      <path d="M326 352C335 332 370 330 381 348L429 485C432 508 392 515 380 496z" fill="#707070" />
      <path d="M337 378C350 368 365 375 371 388L418 505C405 514 388 510 380 496z" fill="#0a52e2" />
      <path d="M250 588 333 573 357 637 436 623 464 686 543 673 566 738V770L319 815 248 625z" fill="#6f6f6f" />
      <path d="M248 625 328 608 353 671 434 658 458 720 539 706 564 770 319 815z" fill="#0a52e2" />
      <path d="M333 573V608M357 637 353 671M436 623 434 658M464 686 458 720M543 673 539 706" fill="none" />
    </g>
    <path d="M925 667 1138 627" stroke="#1d8bff" strokeWidth="6" />
    <Hole x={797} y={147} rx={26} ry={18} /><Hole x={879} y={132} rx={26} ry={18} />
    <Hole x={879} y={330} rx={26} ry={18} /><Hole x={961} y={314} rx={26} ry={18} />
    <Hole x={434} y={297} rx={28} ry={22} /><Hole x={706} y={246} rx={28} ry={22} />
    <Hole x={787} y={462} rx={28} ry={22} /><Hole x={515} y={514} rx={28} ry={22} />
    <g stroke="#101010" strokeWidth="3">
      <ellipse cx="617" cy="379" rx="157" ry="129" fill="url(#rim)" />
      <ellipse cx="612" cy="390" rx="141" ry="109" fill="url(#bore)" />
      <g clipPath="url(#bigClip)"><ellipse cx="604" cy="412" rx="142" ry="91" fill="#0be2e4" /></g>
      <ellipse cx="605" cy="430" rx="85" ry="66" fill="url(#bore)" />
      <g clipPath="url(#boreClip)"><ellipse cx="601" cy="472" rx="84" ry="52" fill="#e2e20c" /></g>
      <ellipse cx="605" cy="430" rx="85" ry="66" fill="none" />
      <ellipse cx="676" cy="548" rx="42" ry="37" fill="url(#ball)" />
      <ellipse cx="707" cy="639" rx="42" ry="33" fill="url(#ball)" />
      <ellipse cx="598" cy="660" rx="42" ry="34" fill="url(#shade)" />
      <path d="M572 682Q596 666 622 682Q598 702 572 682z" fill="#0a52e2" />
      <path d="M836 525 800 562C800 620 910 620 910 562L881 525z" fill="url(#shade)" />
      <ellipse cx="859" cy="530" rx="23" ry="19" fill="#8a0ae0" />
      <path d="M963 515C960 450 1076 445 1076 510V540C1070 588 970 590 963 540z" fill="url(#shade)" />
      <path d="M963 520C975 565 1065 568 1076 515" fill="none" />
      <ellipse cx="1022" cy="499" rx="34" ry="27" fill="#8a0ae0" />
    </g>
    <path d="M448 380h26l-14 170c-5 8-22 8-26 0z" fill="url(#rod)" />
    <path d="M471 308 495 370C490 392 444 394 438 372z" fill="url(#rod)" />
    <path d="M566 724 836 672 838 698 570 750z" fill="url(#rodH)" />
    <path d="M832 655 928 667 844 712Q836 685 832 655z" fill="url(#rodH)" stroke="#7a3002" />
    <path d="M610 354v50M586 379h50" stroke="#f08a12" strokeWidth="5" />
    <circle cx="610" cy="379" r="11" fill="#ff9ec8" />
  </svg>
);

const Triad = () => (
  <svg viewBox="0 0 100 125" className="absolute bottom-[13px] left-[89px] h-[125px] w-[100px]" fontSize="18" fontFamily="Open Sans, sans-serif">
    <path d="M5 29 60 17" stroke="#0a0af0" strokeWidth="2" />
    <path d="M58 12 74 14 60 21z" fill="#1212c8" />
    <path d="M5 29 22 96" stroke="#22d022" strokeWidth="2" />
    <path d="M15 86l8-2v15z" fill="#158a15" />
    <path d="M5 29 10 19" stroke="#f00" strokeWidth="2" />
    <circle cx="11" cy="18" r="4" fill="#a00808" />
    <text x="6" y="21" fill="#f01010">X</text>
    <text x="79" y="18" fill="#1414f0">Z</text>
    <text x="19" y="115" fill="#22d022">Y</text>
  </svg>
);

const ViewBtn = ({ n, more = false, cls }: { n?: string; more?: boolean; cls?: string }) => (
  <button type="button" aria-label={n ?? "颜色"} className="flex h-5 items-center gap-[2px]">
    <span className="flex w-5 justify-center">{n ? <Pic n={n} /> : <span className={cls} />}</span>
    {more && <span className="w-[10px]"><Caret /></span>}
  </button>
);

const Viewport = () => (
  <main className="relative flex-1 overflow-hidden border-l border-[#b9bec8] bg-linear-to-b from-white to-[#9f9f9f]">
    <p className="absolute left-5 top-[5px] text-[11px] leading-[14px] text-[#111]">在基准原点附件移动光标来选择基准轴.<br />&nbsp;&lt;单击右键&gt;获取方向输入选项.</p>
    <div className="relative flex items-center justify-center gap-[5px] pt-[2px]">
      <ViewBtn n="exit" /><ViewBtn n="origin" more /><ViewBtn n="brush" /><ViewBtn n="cubeY" /><ViewBtn n="cubeB" more /><ViewBtn n="cubeW" more />
      <span className="relative"><ViewBtn n="align" more /><Badge cls="left-[6px] top-[14px]">1</Badge></span>
      <ViewBtn n="zoomW" more /><ViewBtn n="rotate" more /><ViewBtn n="fit" /><ViewBtn n="dist" more /><ViewBtn n="screen" more />
      <ViewBtn cls="h-[7px] w-4 bg-black" /><ViewBtn cls="h-[15px] w-4 border border-[#111] bg-[#bfe7f6]" /><ViewBtn n="layers" more />
      <span className="relative flex h-[22px] w-[114px] items-center border border-[#d2d5dc] bg-[#ededed] pl-1 text-[#777]">
        <Pic n="bulb" cls="h-[15px] w-4" />
        <span className="ml-[2px] h-[13px] w-[13px] rounded-full border border-[#999] bg-[#d3d3d3]" />
        <select aria-label="图层" disabled className="flex-1 appearance-none pl-[2px] opacity-100"><option>图层0000</option></select>
        <span className="pointer-events-none absolute right-[6px]"><Caret cls="border-t-[#aaa]" /></span>
      </span>
    </div>
    <Model />
    <Badge cls="left-[755px] top-[447px]">3</Badge>
    <Triad />
    <span className="absolute -bottom-px left-1 text-[17px] leading-[24px] text-[#111]">850.068mm</span>
  </main>
);

const X = () => <svg viewBox="0 0 9 9" className="h-[9px] w-[9px]" stroke="#7d6b3c" strokeWidth="2"><path d="M1 1l7 7M8 1 1 8" /></svg>;

const DocTabs = () => (
  <div className="flex h-[23px] items-stretch border-b-2 border-[#bcc1cb] text-black">
    <button type="button" className="flex w-[157px] items-center justify-end gap-[7px] whitespace-nowrap pr-[16px] pt-[2px]">* 山涧果子.Z3PRT <X /></button>
    <button type="button" className="-mb-[2px] flex w-[154px] items-center justify-end gap-[7px] whitespace-nowrap border border-b-0 border-[#bcc1cb] bg-[#fefefe] pr-[14px]">* 装配001.Z3ASM <X /></button>
    <button type="button" aria-label="新建标签" className="ml-[7px]"><svg viewBox="0 0 10 10" className="h-[10px] w-[10px]" stroke="#a09c9c" strokeWidth="1.600"><path d="M5 0v10M0 5h10" /></svg></button>
    <span className="flex-1" />
    <button type="button" aria-label="标签列表" className="mr-[6px]"><svg viewBox="0 0 8 8" className="h-2 w-2" fill="#8c8686"><path d="M0 0h8v2H0zM0 3.500h8L4 8z" /></svg></button>
  </div>
);

/* ---------- status bar ---------- */

const StatusBar = () => (
  <footer className="relative flex h-[29px] items-center border-t border-[#b9bec8] text-[#222]">
    <span className="flex-1 pl-[5px] pt-px">指定向右方向。</span>
    <div className="relative mr-[6px] flex h-[25px] w-[154px] items-center justify-between rounded-sm border border-[#b3c6e6] bg-white pl-[14px] pr-1 text-[#0a6bd6]">
      <svg viewBox="0 0 32 32" className="absolute -left-[24px] -top-[5px] h-8 w-8">
        <path d="M1 6 25 1l6 5-1 19-5 5-20 2-2-4z" fill="#f1501c" />
        <path d="M23 8C17 5 10 7 10 11c0 6 13 4 13 9 0 4-8 5-14 2" fill="none" stroke="#fff" strokeWidth="4" />
      </svg>
      <b className="text-[14px] leading-none">中</b>
      <svg viewBox="0 0 16 16" className="h-4 w-4" fill="#0a6bd6"><circle cx="4" cy="7" r="2" fill="none" stroke="#0a6bd6" strokeWidth="1.500" /><path d="M9 9h4c0 3-1 5-3 6l-1-1c1-1 1-1 1-2H9z" /></svg>
      <svg viewBox="0 0 16 16" className="h-4 w-4" fill="#0a6bd6"><rect x="5" y="0" width="6" height="10" rx="3" /><path d="M2.500 7c0 7 11 7 11 0M8 12v3.500" fill="none" stroke="#0a6bd6" strokeWidth="1.600" /></svg>
      <svg viewBox="0 0 16 16" className="h-4 w-4" fill="none" stroke="#0a6bd6" strokeWidth="1.600"><rect x="1" y="2.500" width="14" height="11" rx="1.500" /><path d="M3.500 6h9M3.500 8.500h9" strokeDasharray="2 1.500" /><path d="M4 11.200h8" /></svg>
      <svg viewBox="0 0 18 18" className="h-[18px] w-[18px]"><path d="M5 4l3 2 3-2 4 3-2 4-1-1v7H4v-7l-1 1-2-4z" fill="url(#shirt)" /><circle cx="15" cy="3" r="2.800" fill="#fb5336" /></svg>
      <svg viewBox="0 0 16 16" className="h-[15px] w-[15px]" fill="#0a6bd6"><rect x="1" y="1" width="6" height="6" rx="1" /><rect x="9" y="1" width="6" height="6" rx="3" /><rect x="1" y="9" width="6" height="6" rx="1" /><rect x="9" y="9" width="6" height="6" rx="1" /></svg>
    </div>
    <span className="h-6 w-px bg-[#8e939b]" />
    <button type="button" aria-label="工具窗口" className="ml-[15px] flex h-5 w-5 items-center justify-center border border-[#c9941e] bg-[#ffe27d]"><svg viewBox="0 0 14 14" className="h-[14px] w-[14px]"><path d="M.5 1h13v12H.5z" fill="#fff" stroke="#2b66b0" /><path d="M.5 1h13v2H.5z" fill="#2b66b0" /><path d="M4 3v10M2 6h1M2 9h1" stroke="#2b66b0" /><path d="M6 5.500h6" stroke="#b82b2b" strokeWidth="2" /><path d="M9 6v6.500" stroke="#333" strokeWidth="1.500" /></svg></button>
    <button type="button" aria-label="显示" className="ml-[11px]"><svg viewBox="0 0 16 14" className="h-[14px] w-4"><path d="M.5.500h15v10H.5z" fill="#35b6cc" stroke="#31525c" /><path d="M5 11h6v2H5z" fill="#333" /></svg></button>
    <button type="button" aria-label="日志" className="ml-[13px]"><svg viewBox="0 0 14 14" className="h-[14px] w-[14px]"><path d="M.5.500h13v13H.5z" fill="#fff" stroke="#5b7fc4" /><path d="M.5.500h13v3H.5z" fill="#5b7fc4" /><path d="M3 6h8M3 8.500h8M3 11h5" stroke="#7e93bd" /></svg></button>
    <input aria-label="消息" readOnly className="ml-[12px] mr-px h-[22px] w-[350px] border border-[#c3c7cf] bg-white" />
    <span className="pointer-events-none absolute bottom-[9px] right-[4px] whitespace-nowrap font-['Liberation_Sans','Noto_Sans_CJK_SC',sans-serif] text-[36px] leading-[40px] text-[#e2e2e2]/80 [text-shadow:1px_1px_1px_rgba(80,80,80,0.8)]">CSDN @山涧果子</span>
  </footer>
);

export default function App() {
  return (
    <div className="flex min-h-screen flex-col bg-[#e1e5e8] font-['Open_Sans','Noto_Sans_CJK_SC',sans-serif] text-[12px] leading-4 text-[#222]">
      <Defs />
      <header className="flex h-[25px] items-center pl-1 pr-2">
        <Pic n="logo" /><span className="ml-[5px] mr-[2px] h-4 w-px bg-[#b0b4ba]" />
        {["newDoc", "open", "save", "print", "printPlus", "undo", "redo", "sync"].map((n, i) => (
          <button key={n} type="button" aria-label={n} className={i === 0 ? "ml-1 flex w-6 justify-center" : "flex w-6 justify-center"}><Pic n={n} /></button>
        ))}
        <button type="button" aria-label="自定义" className="ml-1"><svg viewBox="0 0 8 8" className="h-2 w-2" fill="#222"><path d="M1 0h6v1.500H1zM0 3.500h8L4 8z" /></svg></button>
        <button type="button" aria-label="播放" className="ml-[10px]"><svg viewBox="0 0 6 10" className="h-[10px] w-[6px]" fill="#2a96e8"><path d="M0 0l6 5-6 5z" /></svg></button>
        <h1 className="flex-1 text-center text-[#444]">中望3D 2025 x64 - [* 装配001.Z3ASM]</h1>
        <div className="flex items-center gap-[11px]">
          <button type="button" aria-label="最小化"><WinIcon d="M2.500 7.500h7v3h-7z" /></button>
          <button type="button" aria-label="还原"><WinIcon d="M4.500.500h7v8h-7zM.5 3.500h7v8h-7zM3 6.500h2v2H3z" /></button>
          <button type="button" aria-label="关闭"><WinIcon d={CROSS} cls="h-[10px] w-3" /></button>
        </div>
      </header>
      <nav className="flex h-[22px] items-stretch border-b border-[#b6bbc6] text-[#333]">
        <button type="button" className="ml-px mr-[3px] mt-px w-[75px] bg-[#2659b3] text-center text-white">文件(F)</button>
        {tabs.map((t) => (
          <button key={t} type="button" className={t === "装配" ? "-mb-px border border-b-0 border-[#b6bbc6] bg-[#fdfdfd] px-[10px]" : "px-[11px] pt-[2px]"}>{t}</button>
        ))}
        <span className="flex-1" />
        <div className="flex items-center pr-1">
          <button type="button" aria-label="折叠功能区" className="mr-[12px]"><svg viewBox="0 0 10 8" className="h-2 w-[10px]" fill="#fff" stroke="#555"><path d="M1 4.500 5 .8l4 3.700V7H7L5 5 3 7H1z" /></svg></button>
          <label className="flex h-[19px] w-[159px] items-center border border-[#b9bec8] bg-white pl-[2px] pr-2">
            <input aria-label="查找命令" placeholder="查找命令" className="min-w-0 flex-1 outline-none placeholder:text-[#777]" />
            <svg viewBox="0 0 14 14" className="h-[14px] w-[14px]" fill="none" stroke="#8b8f94"><circle cx="6" cy="6" r="5.300" /><path d="M10 10l3 3" stroke="#3f9bc0" strokeWidth="1.800" /></svg>
          </label>
          <button type="button" aria-label="设置" className="ml-[9px]"><Pic n="gearG" /></button>
          <button type="button" aria-label="帮助" className="ml-3 flex items-center gap-[5px]"><Pic n="help" /><Caret /></button>
          <button type="button" aria-label="最小化文档" className="ml-[9px]"><WinIcon dark d="M2 10h7" cls="h-[11px] w-[11px]" /></button>
          <button type="button" aria-label="还原文档" className="ml-[5px]"><WinIcon dark d="M4 4V1.500h7V7H8M1 5h7v6H1z" cls="h-[11px] w-[11px]" /></button>
          <button type="button" aria-label="关闭文档" className="ml-[5px]"><WinIcon dark d="M2 2l8 8M10 2 2 10" cls="h-[10px] w-[10px]" /></button>
        </div>
      </nav>
      <Ribbon />
      <SelectBar />
      <div className="flex flex-1 items-stretch">
        <SidePanel />
        <div className="flex min-w-0 flex-1 flex-col pr-px"><DocTabs /><Viewport /></div>
      </div>
      <div className="h-px" />
      <StatusBar />
      <div className="h-[3px] border-t border-white bg-[#cdeaec]" />
    </div>
  );
}
